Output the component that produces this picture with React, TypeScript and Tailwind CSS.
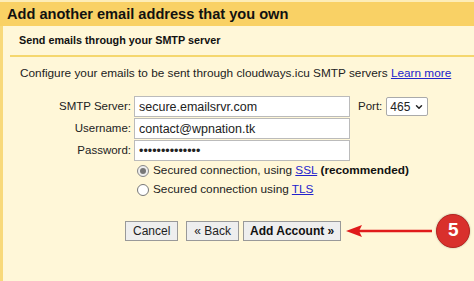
import { ChevronDown } from 'lucide-react';

const font = { fontFamily: '"Liberation Sans", Arial, sans-serif' };

function Field({ label, value, type = 'text' }: { label: string; value: string; type?: string }) {
  return (
    <div className="flex items-center h-[22px]">
      <label className="w-[131px] pr-[3px] text-right text-[11.5px] text-[#222]">{label}</label>
      <input
        readOnly
        type={type}
        value={value}
        className="w-[216px] h-[21px] px-[4px] border border-[#bbb] bg-white text-[12.5px] text-[#222] outline-none"
        style={font}
      />
    </div>
  );
}

export default function App() {
  return (
    <div className="w-[474px] h-[281px] overflow-hidden bg-[#fff7d8] flex flex-col whitespace-nowrap" style={font}>
      {/* Header */}
      <div className="h-[2px] bg-[#fdedb8]" />
      <div className="h-[24px] bg-[#f9d165] flex items-center pl-[7px]">
        <h1 className="text-[14.6px] font-bold text-[#111] leading-none">Add another email address that you own</h1>
      </div>

      {/* Body */}
      <div className="flex-1 flex flex-col border-l-[3px] border-[#f8d97a]">
        <div className="h-[29px] flex items-center pl-[16px]">
          <h2 className="text-[10.8px] font-bold text-[#111]">Send emails through your SMTP server</h2>
        </div>
        <div className="ml-[7px] h-[2px] bg-[#f5d76e]" />

        <p className="mt-[8px] pl-[17px] text-[11.8px] text-[#222]">
          Configure your emails to be sent through cloudways.icu SMTP servers{' '}
          <a className="text-[#2222cc] underline">Learn more</a>
        </p>

        <div className="mt-[13px] flex flex-col">
          <div className="flex items-center">
            <Field label="SMTP Server:" value="secure.emailsrvr.com" />
            <span className="ml-[8px] text-[11.5px] text-[#222]">Port:</span>
            <div className="ml-[4px] w-[42px] h-[19px] border border-[#aaa] rounded-[2px] bg-white flex items-center justify-between px-[3px] text-[12px] text-[#222]">
              465
              <ChevronDown className="w-[10px] h-[10px]" strokeWidth={3.5} />
            </div>
          </div>
          <Field label="Username:" value="contact@wpnation.tk" />
          <Field label="Password:" value="contact1234567" type="password" />
        </div>

        <div className="mt-[1px] pl-[134px] flex flex-col gap-[3px] text-[11.8px] text-[#222]">
          <label className="flex items-center gap-[4px] h-[16px]">
            <span className="w-[12px] h-[12px] rounded-full border border-[#888] bg-[#eee] flex items-center justify-center">
              <span className="w-[6px] h-[6px] rounded-full bg-[#777]" />
            </span>
            <span>
              Secured connection, using <a className="text-[#2222cc] underline">SSL</a>{' '}
              <b className="text-[#111]">(recommended)</b>
            </span>
          </label>
          <label className="flex items-center gap-[4px] h-[16px]">
            <span className="w-[12px] h-[12px] rounded-full border border-[#777] bg-white" />
            <span>
              Secured connection using <a className="text-[#2222cc] underline">TLS</a>
            </span>
          </label>
        </div>

        <div className="mt-[16px] pl-[122px] flex items-center">
          <button className="h-[20px] px-[7px] border border-[#999] bg-[#eee] text-[12px] text-[#222]">Cancel</button>
          <button className="ml-[8px] h-[20px] px-[7px] border border-[#999] bg-[#eee] text-[12px] text-[#222]">« Back</button>
          <button className="ml-[4px] h-[20px] px-[6px] border border-[#999] bg-[#eee] text-[12px] font-bold text-[#111]">
            Add Account »
          </button>
          <svg width="88" height="14" viewBox="0 0 88 14" className="ml-[5px]">
            <line x1="12" y1="7" x2="86" y2="7" stroke="#e01b1b" strokeWidth="2.5" />
            <polygon points="0,7 16,1 13,7 16,13" fill="#e01b1b" />
          </svg>
          <div className="ml-[2px] w-[34px] h-[34px] rounded-full bg-[#d9302c] border border-[#b52420] flex items-center justify-center text-white text-[19px] font-bold shadow-[0_0_2px_rgba(0,0,0,0.3)]">
            5
          </div>
        </div>
      </div>
    </div>
  );
}
